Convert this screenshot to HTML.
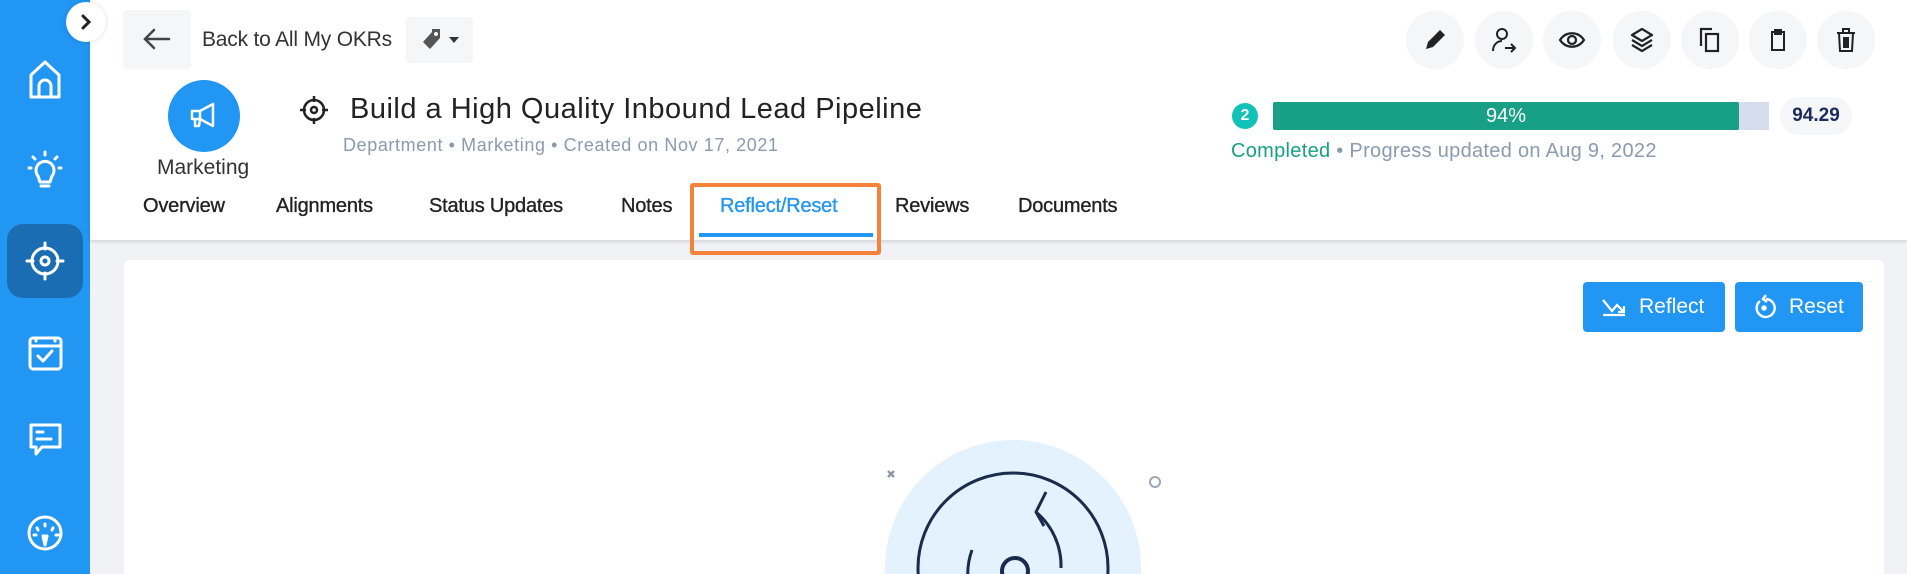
<!DOCTYPE html>
<html><head><style>
*{margin:0;padding:0;box-sizing:border-box}
body{width:1907px;height:574px;overflow:hidden;background:#f0f2f6;font-family:"Liberation Sans",sans-serif;position:relative;color:#222}
.abs{position:absolute}
#side{left:0;top:0;width:90px;height:574px;background:#2196f3}
#hdr{left:90px;top:0;width:1817px;height:240px;background:#fff;box-shadow:0 2px 3px rgba(0,0,0,.12)}
.ic{position:absolute;width:58px;height:58px;border-radius:50%;background:#f5f6f8;top:11px}
.ic svg{position:absolute;left:15px;top:15px}
.tab{position:absolute;top:195px;font-size:20px;color:#222;letter-spacing:-.2px;-webkit-text-stroke:.35px currentColor}
.btn{position:absolute;top:282px;height:50px;background:#2196f3;border-radius:4px;color:#fff;font-size:21px;line-height:50px}
</style></head><body>
<div id="side" class="abs">
 <div class="abs" style="left:7px;top:224px;width:76px;height:74px;background:#1a6db3;border-radius:16px"></div>
 <svg class="abs" style="left:0;top:0" width="90" height="574" fill="none" stroke="#fff" stroke-width="3" stroke-linecap="round" stroke-linejoin="round">
  <path d="M31 97V75l14-13 14 13v22zM39 97V86a6 6 0 0 1 12 0v11"/>
  <path d="M38 176a9 9 0 1 1 14 0l-2 6h-10zM41 186h8M45 152v3M33 157l2 2M57 157l-2 2M29 168h2M59 168h2"/>
  <circle cx="45" cy="261" r="13"/><circle cx="45" cy="261" r="4"/><path d="M45 243v6M45 273v6M27 261h6M57 261h6"/>
  <rect x="30" y="338" width="31" height="31" rx="3"/><path d="M30 346h31M36 338v3M55 338v3M38 356l5 5 9-10"/>
  <path d="M31 425h29v22H42l-6 7v-7h-5zM37 432h6M37 439h14"/>
  <circle cx="45" cy="533" r="16"/><path d="M45 524v2M37 528l1 2M53 528l-1 2M34 535h2M56 535h2M45 545l-2-9h4z"/>
 </svg>
</div>
<div id="hdr" class="abs"></div>
<div class="abs" style="left:66px;top:2px;width:40px;height:40px;border-radius:50%;background:#fff;box-shadow:0 0 4px rgba(0,0,0,.15)"></div>
<svg class="abs" style="left:78px;top:14px" width="16" height="16" fill="none" stroke="#222" stroke-width="3" stroke-linecap="round"><path d="M5 2l6 6-6 6"/></svg>
<div class="abs" style="left:123px;top:10px;width:68px;height:59px;background:#f5f6f8;border-radius:4px"></div>
<svg class="abs" style="left:143px;top:28px" width="28" height="22" fill="none" stroke="#444" stroke-width="2.5" stroke-linecap="round"><path d="M2 11h24M11 2L2 11l9 9"/></svg>
<div class="abs" style="left:202px;top:28px;font-size:21px;color:#333;letter-spacing:-.2px">Back to All My OKRs</div>
<div class="abs" style="left:406px;top:17px;width:67px;height:46px;background:#f5f6f8;border-radius:4px"></div>
<svg class="abs" style="left:420px;top:27px" width="44" height="26"><path d="M12 2h8v9l-10 11-7-7L12 5z" fill="#555"/><circle cx="16" cy="7" r="2" fill="#f5f6f8"/><path d="M29 10h10l-5 6z" fill="#333"/></svg>
<div class="abs" style="left:168px;top:80px;width:72px;height:72px;border-radius:50%;background:#2196f3"></div>
<svg class="abs" style="left:188px;top:100px" width="32" height="32" fill="none" stroke="#fff" stroke-width="2.5" stroke-linejoin="round"><path d="M4 11h8l13-7v22l-13-7H4zM12 11v8M7 19v7h4l1-7"/></svg>
<div class="abs" style="left:157px;top:156px;font-size:21px;color:#333">Marketing</div>
<svg class="abs" style="left:298px;top:94px" width="32" height="32" fill="none" stroke="#222" stroke-width="2.5"><circle cx="16" cy="16" r="10"/><circle cx="16" cy="16" r="3"/><path d="M16 2v6M16 24v6M2 16h6M24 16h6"/></svg>
<div class="abs" style="left:350px;top:93px;font-size:29px;color:#222;letter-spacing:.5px">Build a High Quality Inbound Lead Pipeline</div>
<div class="abs" style="left:343px;top:135px;font-size:18px;color:#8a9bb0;letter-spacing:.6px">Department • Marketing • Created on Nov 17, 2021</div>
<div class="tab" style="left:143px">Overview</div>
<div class="tab" style="left:276px">Alignments</div>
<div class="tab" style="left:429px">Status Updates</div>
<div class="tab" style="left:621px">Notes</div>
<div class="tab" style="left:720px;color:#2196f3">Reflect/Reset</div>
<div class="tab" style="left:895px">Reviews</div>
<div class="tab" style="left:1018px">Documents</div>
<div class="abs" style="left:699px;top:233px;width:174px;height:4px;background:#2196f3"></div>
<div class="abs" style="left:690px;top:183px;width:191px;height:72px;border:4px solid #f5813a;border-radius:3px"></div>
<div class="ic" style="left:1406px"><svg width="28" height="28"><path d="M5 23l2-7L19 4l5 5-12 12z" fill="#222"/></svg></div>
<div class="ic" style="left:1475px"><svg width="28" height="28" fill="none" stroke="#222" stroke-width="2"><circle cx="12" cy="8" r="5"/><path d="M3 25c0-6 4-10 9-10M15 22h10M21 18l4 4-4 4"/></svg></div>
<div class="ic" style="left:1543px"><svg width="28" height="28" fill="none" stroke="#222" stroke-width="2.2"><path d="M2 14c6-9 18-9 24 0-6 9-18 9-24 0z"/><circle cx="14" cy="14" r="4"/></svg></div>
<div class="ic" style="left:1613px"><svg width="28" height="28" fill="none" stroke="#222" stroke-width="2.2" stroke-linejoin="round"><path d="M14 3l10 6-10 6-10-6zM4 14l10 6 10-6M4 19l10 6 10-6"/></svg></div>
<div class="ic" style="left:1681px"><svg width="28" height="28" fill="none" stroke="#222" stroke-width="2.2"><path d="M5 20V3h11"/><rect x="10" y="8" width="12" height="17"/></svg></div>
<div class="ic" style="left:1749px"><svg width="28" height="28" fill="none" stroke="#222" stroke-width="2"><rect x="8" y="6" width="12" height="18"/><rect x="11" y="4" width="6" height="4" fill="#222"/></svg></div>
<div class="ic" style="left:1817px"><svg width="28" height="28" fill="none" stroke="#222" stroke-width="2"><path d="M5 7h18M11 7V3h6v4M7 7l1 18h12l1-18M12 11v11M14 11v11M16 11v11"/></svg></div>
<div class="abs" style="left:1232px;top:103px;width:26px;height:26px;border-radius:50%;background:#12c2b8;color:#fff;font-weight:bold;font-size:16px;text-align:center;line-height:26px">2</div>
<div class="abs" style="left:1273px;top:102px;width:496px;height:28px;background:#d6deee"></div>
<div class="abs" style="left:1273px;top:102px;width:466px;height:28px;background:#17a085;border-radius:2px;color:#fff;font-size:20px;text-align:center;line-height:28px">94%</div>
<div class="abs" style="left:1780px;top:97px;width:72px;height:38px;border-radius:19px;background:#f5f6f8;color:#1a2b5e;font-weight:bold;font-size:19px;text-align:center;line-height:38px">94.29</div>
<div class="abs" style="left:1231px;top:140px;font-size:20px;color:#8a9bb0;letter-spacing:.3px"><span style="color:#17a085">Completed</span> • Progress updated on Aug 9, 2022</div>
<div class="abs" style="left:124px;top:260px;width:1760px;height:314px;background:#fff;border-radius:6px 6px 0 0"></div>
<div class="btn" style="left:1583px;width:142px"><svg class="abs" style="left:18px;top:15px" width="26" height="20" fill="none" stroke="#fff" stroke-width="2.2"><path d="M2 3l9 11 5-6 7 7M17 15h6v-6M2 18h22"/></svg><span style="position:absolute;left:56px">Reflect</span></div>
<div class="btn" style="left:1735px;width:128px"><svg class="abs" style="left:16px;top:12px" width="26" height="26" fill="none" stroke="#fff" stroke-width="2.4"><path d="M9 7a9 9 0 1 0 6-2M15 1l-3 4 4 3"/><circle cx="13" cy="14" r="1.5" fill="#fff"/></svg><span style="position:absolute;left:54px">Reset</span></div>
<svg class="abs" style="left:870px;top:430px" width="300" height="144" fill="none">
 <circle cx="143" cy="138" r="128" fill="#e3f2fd"/>
 <circle cx="143" cy="138" r="95" stroke="#1a2b4e" stroke-width="3"/>
 <path d="M166 82a70 70 0 0 1 25 56" stroke="#1a2b4e" stroke-width="3"/>
 <path d="M176 62l-10 20 8 14" stroke="#1a2b4e" stroke-width="3" stroke-linejoin="round"/>
 <path d="M102 120a70 70 0 0 0-4 30" stroke="#1a2b4e" stroke-width="3"/>
 <circle cx="145" cy="141" r="13" stroke="#1a2b4e" stroke-width="4"/>
 <path d="M18 41l6 6M24 41l-6 6" stroke="#8e98a8" stroke-width="2.5"/>
 <circle cx="285" cy="52" r="5" stroke="#a0a8b8" stroke-width="2"/>
</svg>
</body></html>
